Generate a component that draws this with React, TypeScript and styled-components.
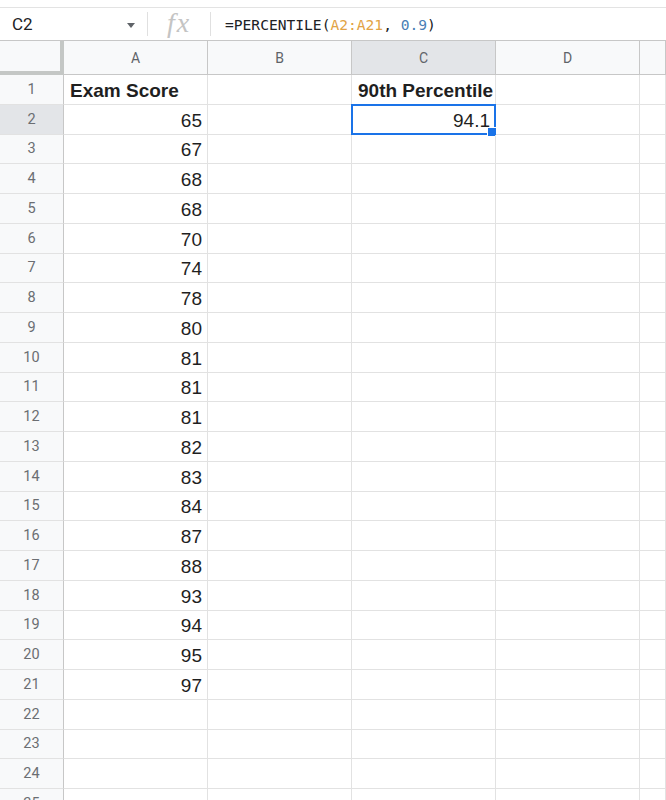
import React from 'react';
import styled, { createGlobalStyle } from 'styled-components';

const Global = createGlobalStyle`
  html, body { margin: 0; padding: 0; background: #ffffff; overflow: hidden; }
  body { font-family: "Liberation Sans", Arial, sans-serif; }
`;

const Page = styled.div`
  width: 666px;
  height: 800px;
  overflow: hidden;
  padding-top: 7px;
  box-sizing: border-box;
  background: #ffffff;
`;

const FormulaBar = styled.div`
  display: flex;
  align-items: center;
  height: 34px;
  box-sizing: border-box;
  border-top: 1px solid #e3e3e3;
  border-bottom: 1px solid #c7c7c7;
`;

const NameBox = styled.div`
  width: 147px;
  height: 100%;
  display: flex;
  align-items: center;
  justify-content: space-between;
  padding: 0 12px 0 12px;
  box-sizing: border-box;
  font-family: Roboto, "Liberation Sans", Arial, sans-serif;
  font-size: 17px;
  color: #202124;
`;

const Caret = styled.span`
  width: 0;
  height: 0;
  border-left: 4.5px solid transparent;
  border-right: 4.5px solid transparent;
  border-top: 5px solid #5f6368;
  margin-top: 2px;
`;

const Divider = styled.div`
  width: 1px;
  height: 24px;
  background: #e0e0e0;
`;

const FxLabel = styled.div`
  width: 62px;
  display: flex;
  justify-content: center;
  align-items: center;
  font-family: "Liberation Serif", "Times New Roman", serif;
  font-style: italic;
  font-size: 28px;
  letter-spacing: 2px;
  color: #c4c4c4;
  line-height: 1;
  margin-top: -2px;
`;

const Formula = styled.div`
  padding-left: 14px;
  font-family: "DejaVu Sans Mono", "Liberation Mono", monospace;
  font-size: 14.6px;
  color: #202124;
  white-space: pre;
`;

const Ref = styled.span`
  color: #e2a345;
`;

const Num = styled.span`
  color: #4a7fb6;
`;

const Grid = styled.div`
  display: grid;
  grid-template-columns: 64px repeat(4, 144px) 1fr;
  grid-template-rows: 34px;
  grid-auto-rows: 29.75px;
`;

const Corner = styled.div`
  background: #f8f9fa;
  border-right: 4px solid #c4c7c5;
  border-bottom: 4px solid #c4c7c5;
  box-sizing: border-box;
`;

const ColHeader = styled.div<{ $active?: boolean }>`
  background: ${(p) => (p.$active ? '#e3e5e8' : '#f8f9fa')};
  border-right: 1px solid #c7c7c7;
  border-bottom: 1px solid #c7c7c7;
  box-sizing: border-box;
  display: flex;
  align-items: center;
  justify-content: center;
  font-family: Roboto, "Liberation Sans", Arial, sans-serif;
  font-size: 14px;
  color: #5f6368;
`;

const RowHeader = styled.div<{ $active?: boolean }>`
  background: ${(p) => (p.$active ? '#e3e5e8' : '#f8f9fa')};
  border-right: 1px solid #c7c7c7;
  border-bottom: 1px solid #e2e2e2;
  box-sizing: border-box;
  display: flex;
  align-items: center;
  justify-content: center;
  font-family: Roboto, "Liberation Sans", Arial, sans-serif;
  font-size: 14.5px;
  color: #6b6e72;
`;

const Cell = styled.div<{ $align?: 'left' | 'right'; $bold?: boolean; $selected?: boolean }>`
  position: relative;
  border-right: 1px solid #e2e2e2;
  border-bottom: 1px solid #e2e2e2;
  box-sizing: border-box;
  display: flex;
  align-items: flex-end;
  justify-content: ${(p) => (p.$align === 'right' ? 'flex-end' : 'flex-start')};
  padding: 0 5px 2px 6px;
  font-family: "Liberation Sans", Arial, sans-serif;
  font-size: 19px;
  line-height: 22px;
  font-weight: ${(p) => (p.$bold ? 700 : 400)};
  color: #1f1f1f;
  white-space: nowrap;
  overflow: visible;
`;

const SelectionFrame = styled.div`
  position: absolute;
  left: -1px;
  top: -1px;
  right: -1px;
  bottom: -1px;
  border: 2px solid #1a73e8;
  pointer-events: none;
`;

const FillHandle = styled.div`
  position: absolute;
  right: -3px;
  bottom: -4px;
  width: 8px;
  height: 8px;
  background: #1a73e8;
  border: 1px solid #ffffff;
  box-sizing: content-box;
`;

const scores = [65, 67, 68, 68, 70, 74, 78, 80, 81, 81, 81, 82, 83, 84, 87, 88, 93, 94, 95, 97];
const columns = ['A', 'B', 'C', 'D', ''];

export default function App() {
  const rows = Array.from({ length: 25 }, (_, i) => i + 1);
  return (
    <Page>
      <Global />
      <FormulaBar>
        <NameBox>
          <span>C2</span>
          <Caret />
        </NameBox>
        <Divider />
        <FxLabel>fx</FxLabel>
        <Divider />
        <Formula>
          =PERCENTILE(<Ref>A2:A21</Ref>, <Num>0.9</Num>)
        </Formula>
      </FormulaBar>
      <Grid>
        <Corner />
        {columns.map((c, i) => (
          <ColHeader key={`h${i}`} $active={c === 'C'}>
            {c}
          </ColHeader>
        ))}
        {rows.map((r) => {
          let a: React.ReactNode = null;
          let c: React.ReactNode = null;
          if (r === 1) {
            a = 'Exam Score';
            c = '90th Percentile';
          } else if (r <= 21) {
            a = scores[r - 2];
          }
          if (r === 2) c = '94.1';
          return (
            <React.Fragment key={r}>
              <RowHeader $active={r === 2}>{r}</RowHeader>
              <Cell $bold={r === 1} $align={r === 1 ? 'left' : 'right'}>
                {a}
              </Cell>
              <Cell />
              <Cell $bold={r === 1} $align={r === 1 ? 'left' : 'right'}>
                {c}
                {r === 2 && (
                  <SelectionFrame>
                    <FillHandle />
                  </SelectionFrame>
                )}
              </Cell>
              <Cell />
              <Cell />
            </React.Fragment>
          );
        })}
      </Grid>
    </Page>
  );
}
